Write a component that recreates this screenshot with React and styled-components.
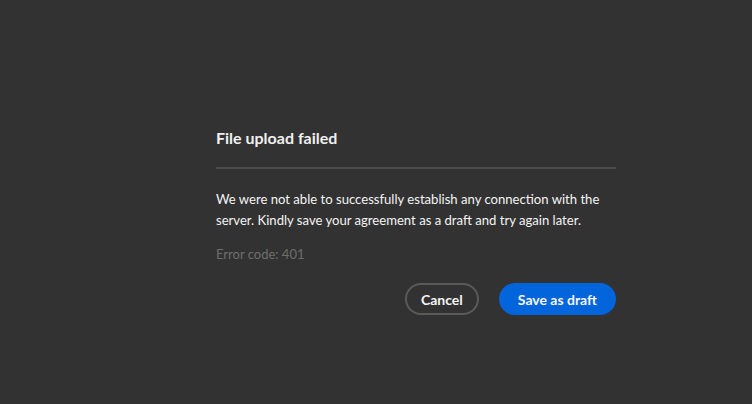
import styled, { createGlobalStyle } from 'styled-components';

const Global = createGlobalStyle`
  html, body {
    margin: 0;
    height: 100%;
    background: #323232;
  }
  #root {
    height: 100%;
  }
`;

const Page = styled.main`
  height: 404px;
  box-sizing: border-box;
  padding: 128px 0 0 216px;
  font-family: Lato, 'Liberation Sans', sans-serif;
  color: #ebebeb;
`;

const Dialog = styled.section`
  width: 400px;
  display: flex;
  flex-direction: column;
`;

const Title = styled.h2`
  margin: 0;
  font-size: 16px;
  font-weight: 700;
  line-height: 20px;
  color: #f0f0f0;
`;

const Divider = styled.hr`
  margin: 19px 0 0;
  border: 0;
  height: 2px;
  background: #4b4b4b;
`;

const Body = styled.p`
  margin: 20px 0 0;
  font-size: 13.1px;
  line-height: 21px;
  color: #f4f4f4;
`;

const ErrorCode = styled.p`
  margin: 13px 0 0;
  font-size: 13px;
  line-height: 20px;
  color: #6e6e6e;
`;

const Actions = styled.div`
  display: flex;
  justify-content: flex-end;
  gap: 20px;
  margin-top: 19px;
`;

const Button = styled.button`
  height: 32px;
  box-sizing: border-box;
  padding: 0 ${({ $primary }) => ($primary ? '17px' : '14px')};
  border-radius: 16px;
  border: 2px solid ${({ $primary }) => ($primary ? '#0265dc' : '#5a5a5a')};
  background: ${({ $primary }) => ($primary ? '#0265dc' : 'transparent')};
  color: #f5f5f5;
  font-family: inherit;
  font-size: 14px;
  font-weight: 700;
  cursor: pointer;
`;

const App = () => (
  <>
    <Global />
    <Page>
      <Dialog role="alertdialog">
        <Title>File upload failed</Title>
        <Divider />
        <Body>
          We were not able to successfully establish any connection with the
          server. Kindly save your agreement as a draft and try again later.
        </Body>
        <ErrorCode>Error code: 401</ErrorCode>
        <Actions>
          <Button>Cancel</Button>
          <Button $primary>Save as draft</Button>
        </Actions>
      </Dialog>
    </Page>
  </>
);

export default App;
